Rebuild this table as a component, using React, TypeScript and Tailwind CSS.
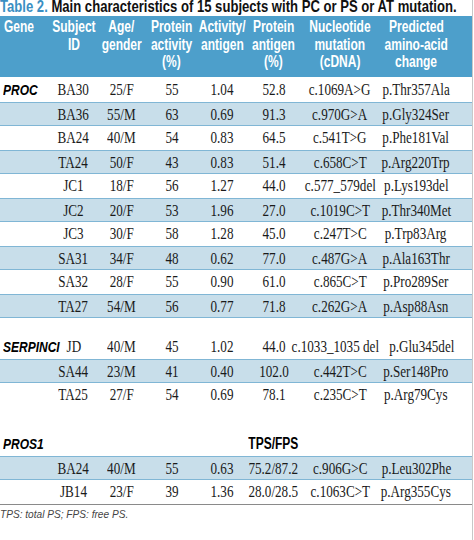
const sans = "[font-family:'Liberation_Sans',Arial,sans-serif]";

const cols = 'grid grid-cols-[50px_47px_49px_51px_50px_53px_80px_72px]';

type Row = {
  gene?: string;
  id: string;
  age: string;
  act: string;
  ratio: string;
  antigen: string;
  cdna: string;
  protein: string;
  wide?: boolean;
};

const proc: Row[] = [
  { gene: 'PROC', id: 'BA30', age: '25/F', act: '55', ratio: '1.04', antigen: '52.8', cdna: 'c.1069A>G', protein: 'p.Thr357Ala' },
  { id: 'BA36', age: '55/M', act: '63', ratio: '0.69', antigen: '91.3', cdna: 'c.970G>A', protein: 'p.Gly324Ser' },
  { id: 'BA24', age: '40/M', act: '54', ratio: '0.83', antigen: '64.5', cdna: 'c.541T>G', protein: 'p.Phe181Val' },
  { id: 'TA24', age: '50/F', act: '43', ratio: '0.83', antigen: '51.4', cdna: 'c.658C>T', protein: 'p.Arg220Trp' },
  { id: 'JC1', age: '18/F', act: '56', ratio: '1.27', antigen: '44.0', cdna: 'c.577_579del', protein: 'p.Lys193del' },
  { id: 'JC2', age: '20/F', act: '53', ratio: '1.96', antigen: '27.0', cdna: 'c.1019C>T', protein: 'p.Thr340Met' },
  { id: 'JC3', age: '30/F', act: '58', ratio: '1.28', antigen: '45.0', cdna: 'c.247T>C', protein: 'p.Trp83Arg' },
  { id: 'SA31', age: '34/F', act: '48', ratio: '0.62', antigen: '77.0', cdna: 'c.487G>A', protein: 'p.Ala163Thr' },
  { id: 'SA32', age: '28/F', act: '55', ratio: '0.90', antigen: '61.0', cdna: 'c.865C>T', protein: 'p.Pro289Ser' },
  { id: 'TA27', age: '54/M', act: '56', ratio: '0.77', antigen: '71.8', cdna: 'c.262G>A', protein: 'p.Asp88Asn' },
];

const serpinc: Row[] = [
  { gene: 'SERPINCI', id: 'JD', age: '40/M', act: '45', ratio: '1.02', antigen: '44.0', cdna: 'c.1033_1035 del', protein: 'p.Glu345del', wide: true },
  { id: 'SA44', age: '23/M', act: '41', ratio: '0.40', antigen: '102.0', cdna: 'c.442T>C', protein: 'p.Ser148Pro' },
  { id: 'TA25', age: '27/F', act: '54', ratio: '0.69', antigen: '78.1', cdna: 'c.235C>T', protein: 'p.Arg79Cys' },
];

const pros: Row[] = [
  { id: 'BA24', age: '40/M', act: '55', ratio: '0.63', antigen: '75.2/87.2', cdna: 'c.906G>C', protein: 'p.Leu302Phe' },
  { id: 'JB14', age: '23/F', act: '39', ratio: '1.36', antigen: '28.0/28.5', cdna: 'c.1063C>T', protein: 'p.Arg355Cys' },
];

const headers = [
  ['Subject', 'ID'],
  ['Age/', 'gender'],
  ['Protein', 'activity', '(%)'],
  ['Activity/', 'antigen'],
  ['Protein', 'antigen', '(%)'],
  ['Nucleotide', 'mutation', '(cDNA)'],
  ['Predicted', 'amino-acid', 'change'],
];

// condensed look: the picture uses narrow typefaces we don't have
function Cell({ children, shift = '' }: { children: React.ReactNode; shift?: string }) {
  return (
    <div className={`flex justify-center whitespace-nowrap ${shift}`}>
      <span className="inline-block scale-x-[0.82]">{children}</span>
    </div>
  );
}

function GeneLabel({ name }: { name?: string }) {
  return (
    <div className={`pl-[3px] text-[15px] font-bold italic text-black whitespace-nowrap ${sans}`}>
      <span className="inline-block origin-left scale-x-[0.8]">{name}</span>
    </div>
  );
}

function DataRow({ row, shaded }: { row: Row; shaded: boolean }) {
  const bg = shaded ? 'bg-[#c8deea] border-y border-[#80b6d5]' : '';
  return (
    <div className={`${cols} h-[24px] items-center box-border ${bg}`}>
      <GeneLabel name={row.gene} />
      <Cell>{row.id}</Cell>
      <Cell>{row.age}</Cell>
      <Cell>{row.act}</Cell>
      <Cell>{row.ratio}</Cell>
      <Cell>{row.antigen}</Cell>
      <Cell shift={row.wide ? '-translate-x-[5px]' : ''}>{row.cdna}</Cell>
      <Cell shift={row.wide ? 'translate-x-[6px]' : ''}>{row.protein}</Cell>
    </div>
  );
}

export default function App() {
  return (
    <div className="w-[473px] h-[540px] overflow-hidden bg-white border-r border-[#c8c8c8] box-border">
      <div className={`-mt-[3px] h-[19px] text-[17px] leading-[19px] font-bold whitespace-nowrap text-[#111] ${sans}`}>
        <span className="inline-block origin-left scale-x-[0.77]">
          <span className="text-[#3a8fc3]">Table 2.</span> Main characteristics of 15 subjects with PC or PS or AT mutation.
        </span>
      </div>

      {/* header band */}
      <div className={`${cols} h-[61px] bg-[#4d9fcb] pt-[2px] text-white font-bold text-[16px] leading-[17.5px] ${sans}`}>
        <div className="pl-[4px]">
          <span className="inline-block origin-left scale-x-[0.75]">Gene</span>
        </div>
        {headers.map((lines, i) => (
          <div key={i} className="flex flex-col items-center whitespace-nowrap">
            {lines.map((l) => (
              <span key={l} className="inline-block scale-x-[0.75]">{l}</span>
            ))}
          </div>
        ))}
      </div>

      <div className="mt-[1px] text-[16px] text-[#1a1a1a] [font-family:'Liberation_Serif',serif]">
        {proc.map((r, i) => (
          <DataRow key={r.id + i} row={r} shaded={i % 2 === 1} />
        ))}

        <div className="mt-[17px]">
          {serpinc.map((r, i) => (
            <DataRow key={r.id + i} row={r} shaded={i % 2 === 1} />
          ))}
        </div>

        <div className={`${cols} mt-[25px] h-[24px] items-center`}>
          <GeneLabel name="PROS1" />
          <div />
          <div />
          <div />
          <div />
          <div className={`flex justify-center font-bold text-[16px] text-black ${sans}`}>
            <span className="inline-block scale-x-[0.75]">TPS/FPS</span>
          </div>
        </div>
        {pros.map((r, i) => (
          <DataRow key={r.id + i} row={r} shaded={i % 2 === 0} />
        ))}
        <div className="border-t border-[#8a8a8a]" />
      </div>

      <div className={`mt-[1px] text-[11px] italic text-[#444] ${sans}`}>
        <span className="inline-block origin-left scale-x-[0.92]">TPS: total PS; FPS: free PS.</span>
      </div>
    </div>
  );
}
